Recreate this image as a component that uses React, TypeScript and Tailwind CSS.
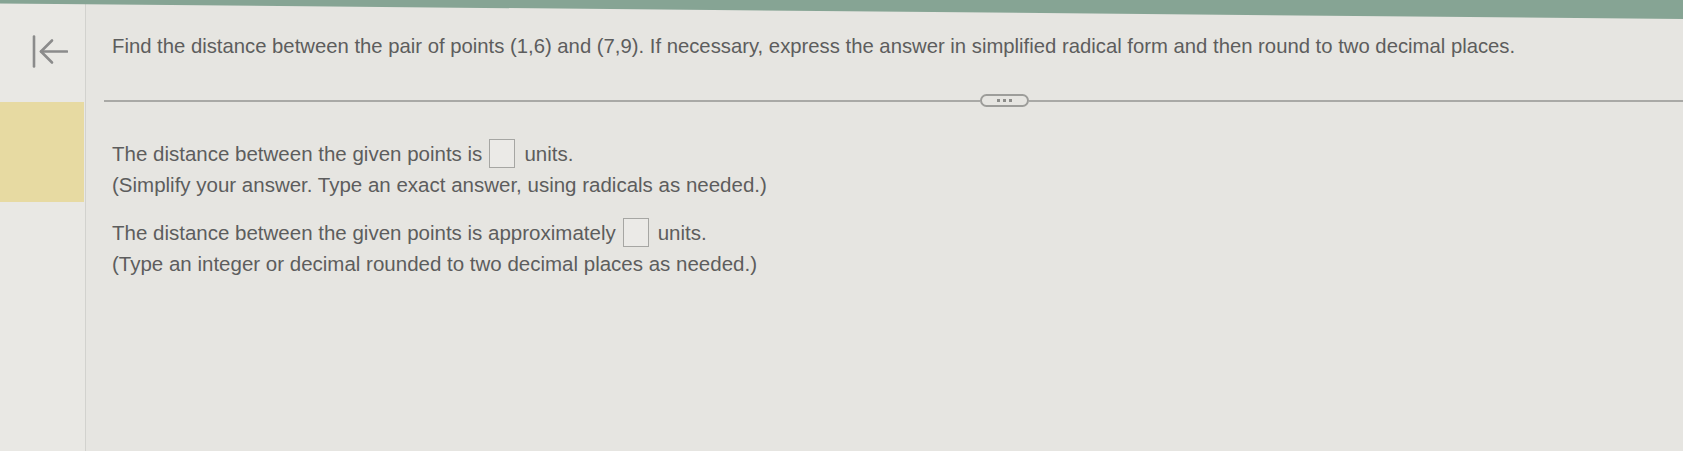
export default function App() {
  return (
    <div className="relative w-full h-[451px] overflow-hidden bg-[#e6e5e1] flex flex-col font-['Liberation_Sans',Arial,sans-serif] text-[#5d5d5d]">
      {/* top bar, tilted in the photo */}
      <div className="absolute top-0 left-0 right-0 h-[19px] bg-[#86a494] [clip-path:polygon(0_0,100%_0,100%_100%,0_18%)]" />
      <div className="h-[4px] shrink-0" />
      <div className="flex flex-1">
        {/* left rail */}
        <div className="w-[86px] shrink-0 border-r border-[#d2d2ce] bg-[#e9e8e4] flex flex-col">
          <div className="pl-[32px] pt-[31px] h-[98px]">
            <svg width="36" height="33" viewBox="0 0 36 33" fill="none" stroke="#8b8b8b" strokeWidth="2.6" strokeLinecap="round" strokeLinejoin="round">
              <path d="M2 1.5v30" />
              <path d="M9 16.5h26" />
              <path d="M20 5.5L9 16.5l11 11" />
            </svg>
          </div>
          <div className="h-[100px] w-[84px] bg-[#e7daa2]" />
        </div>

        {/* main */}
        <div className="flex-1 flex flex-col">
          <div className="pl-[26px] pt-[30px] h-[90px] text-[20.3px] leading-[24px]">
            Find the distance between the pair of points (1,6) and (7,9). If necessary, express the answer in simplified radical form and then round to two decimal places.
          </div>
          <div className="ml-[18px] flex items-center">
            <div className="w-[876px] h-[2px] bg-[#a9a9a6]" />
            <div className="w-[49px] h-[13px] rounded-full border-2 border-[#9d9d9a] flex items-center justify-center gap-[3px]">
              <span className="w-[3px] h-[3px] bg-[#8d8d8a]" />
              <span className="w-[3px] h-[3px] bg-[#8d8d8a]" />
              <span className="w-[3px] h-[3px] bg-[#8d8d8a]" />
            </div>
            <div className="flex-1 h-[2px] bg-[#a9a9a6]" />
          </div>

          <div className="pl-[26px] pt-[31px] text-[20.5px] leading-[31px]">
            <div className="flex items-center">
              The distance between the given points is
              <span className="inline-block w-[26px] h-[29px] ml-[7px] mr-[9px] border border-[#a6a6a3] bg-[#ebeae7]" />
              units.
            </div>
            <div>(Simplify your answer. Type an exact answer, using radicals as needed.)</div>
            <div className="flex items-center mt-[17px]">
              The distance between the given points is approximately
              <span className="inline-block w-[26px] h-[29px] ml-[7px] mr-[9px] border border-[#a6a6a3] bg-[#ebeae7]" />
              units.
            </div>
            <div>(Type an integer or decimal rounded to two decimal places as needed.)</div>
          </div>
        </div>
      </div>
    </div>
  );
}
